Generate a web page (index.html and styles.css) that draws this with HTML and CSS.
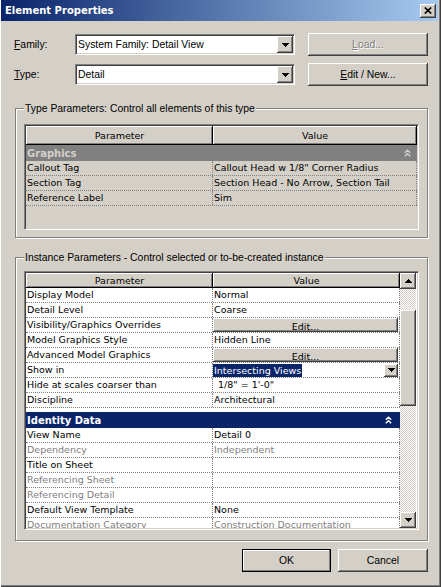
FILE: index.html
```html
<!DOCTYPE html>
<html>
<head>
<meta charset="utf-8">
<title>Element Properties</title>
<link rel="stylesheet" href="styles.css">
</head>
<body>
<div class="window">
  <div class="titlebar">
    <span class="title">Element Properties</span>
    <span class="close"><svg width="8" height="7" viewBox="0 0 8 7"><path d="M0.8 0.5L7.2 6.5M7.2 0.5L0.8 6.5" stroke="#000" stroke-width="1.7"/></svg></span>
  </div>

  <div class="field-row r1">
    <span class="lbl"><u>F</u>amily:</span>
    <div class="combo">
      <span class="combo-text">System Family: Detail View</span>
      <span class="drop"><svg width="7" height="4" viewBox="0 0 7 4" shape-rendering="crispEdges"><path d="M0 0h7v1h-1v1h-1v1h-1v1h-1v-1h-1v-1h-1v-1h-1z"/></svg></span>
    </div>
    <span class="btn side disabled"><u>L</u>oad...</span>
  </div>

  <div class="field-row r2">
    <span class="lbl"><u>T</u>ype:</span>
    <div class="combo">
      <span class="combo-text">Detail</span>
      <span class="drop"><svg width="7" height="4" viewBox="0 0 7 4" shape-rendering="crispEdges"><path d="M0 0h7v1h-1v1h-1v1h-1v1h-1v-1h-1v-1h-1v-1h-1z"/></svg></span>
    </div>
    <span class="btn side"><u>E</u>dit / New...</span>
  </div>

  <div class="group g1">
    <span class="group-title">Type Parameters: Control all elements of this type</span>
    <div class="grid type-grid">
      <div class="hrow tall">
        <span class="hcell h1">Parameter</span>
        <span class="hcell h2">Value</span>
      </div>
      <div class="cat gray">
        <span>Graphics</span>
        <svg class="chev" width="7" height="8" viewBox="0 0 7 8"><path d="M0.8 3.8L3.5 1.2L6.2 3.8M0.8 7.3L3.5 4.7L6.2 7.3" fill="none" stroke="currentColor" stroke-width="1.4"/></svg>
      </div>
      <div class="row"><span class="c1">Callout Tag</span><span class="c2">Callout Head w 1/8" Corner Radius</span></div>
      <div class="row"><span class="c1">Section Tag</span><span class="c2">Section Head - No Arrow, Section Tail</span></div>
      <div class="row"><span class="c1">Reference Label</span><span class="c2">Sim</span></div>
    </div>
  </div>

  <div class="group g2">
    <span class="group-title">Instance Parameters - Control selected or to-be-created instance</span>
    <div class="grid inst-grid">
      <div class="list">
        <div class="hrow">
          <span class="hcell h1">Parameter</span>
          <span class="hcell h2">Value</span>
        </div>
        <div class="rows">
          <div class="row"><span class="c1">Display Model</span><span class="c2">Normal</span></div>
          <div class="row"><span class="c1">Detail Level</span><span class="c2">Coarse</span></div>
          <div class="row"><span class="c1">Visibility/Graphics Overrides</span><span class="c2 nopad"><span class="cell-btn">Edit...</span></span></div>
          <div class="row"><span class="c1">Model Graphics Style</span><span class="c2">Hidden Line</span></div>
          <div class="row"><span class="c1">Advanced Model Graphics</span><span class="c2 nopad"><span class="cell-btn">Edit...</span></span></div>
          <div class="row"><span class="c1">Show in</span><span class="c2 nopad combo-cell"><span class="sel">Intersecting Views</span><span class="dd"><svg width="7" height="4" viewBox="0 0 7 4" shape-rendering="crispEdges"><path d="M0 0h7v1h-1v1h-1v1h-1v1h-1v-1h-1v-1h-1v-1h-1z"/></svg></span></span></div>
          <div class="row"><span class="c1">Hide at scales coarser than</span><span class="c2 indent">1/8" = 1'-0"</span></div>
          <div class="row"><span class="c1">Discipline</span><span class="c2">Architectural</span></div>
          <div class="cat navy">
            <span>Identity Data</span>
            <svg class="chev" width="7" height="8" viewBox="0 0 7 8"><path d="M0.8 3.8L3.5 1.2L6.2 3.8M0.8 7.3L3.5 4.7L6.2 7.3" fill="none" stroke="currentColor" stroke-width="1.4"/></svg>
          </div>
          <div class="row"><span class="c1">View Name</span><span class="c2">Detail 0</span></div>
          <div class="row dis"><span class="c1">Dependency</span><span class="c2">Independent</span></div>
          <div class="row"><span class="c1">Title on Sheet</span><span class="c2"></span></div>
          <div class="row dis"><span class="c1">Referencing Sheet</span><span class="c2"></span></div>
          <div class="row dis"><span class="c1">Referencing Detail</span><span class="c2"></span></div>
          <div class="row"><span class="c1">Default View Template</span><span class="c2">None</span></div>
          <div class="row dis"><span class="c1">Documentation Category</span><span class="c2">Construction Documentation</span></div>
        </div>
      </div>
      <div class="scrollbar">
        <span class="sb-btn"><svg width="7" height="4" viewBox="0 0 7 4" shape-rendering="crispEdges"><path d="M3 0h1v1h1v1h1v1h1v1h-7v-1h1v-1h1v-1h1z"/></svg></span>
        <span class="track-a"></span>
        <span class="thumb"></span>
        <span class="track-b"></span>
        <span class="sb-btn"><svg width="7" height="4" viewBox="0 0 7 4" shape-rendering="crispEdges"><path d="M0 0h7v1h-1v1h-1v1h-1v1h-1v-1h-1v-1h-1v-1h-1z"/></svg></span>
      </div>
    </div>
  </div>

  <div class="footer">
    <span class="btn ok">OK</span>
    <span class="btn cancel">Cancel</span>
  </div>
</div>
</body>
</html>
```

FILE: styles.css
```css
html, body {
  margin: 0;
  padding: 0;
  background: #D4D0C8;
}

.window {
  width: 441px;
  height: 587px;
  box-sizing: border-box;
  background: #D4D0C8;
  box-shadow: inset 1px 0 #ffffff, inset -1px -1px #404040, inset -2px -2px #808080;
  overflow: hidden;
  font-family: "Liberation Sans", Arial, sans-serif;
  font-size: 10.4px;
  color: #000;
}

/* ---------- title bar ---------- */
.titlebar {
  height: 21px;
  margin: 0 3px 0 1px;
  padding: 0 2px 0 4px;
  background: linear-gradient(to right, #0A246A, #A6CAF0);
  display: flex;
  align-items: center;
  justify-content: space-between;
}
.title {
  color: #fff;
  font-family: "DejaVu Sans", Verdana, sans-serif;
  font-weight: bold;
  font-size: 10px;
}
.close {
  width: 16px;
  height: 14px;
  background: #D4D0C8;
  box-shadow: inset -1px -1px #404040, inset 1px 1px #fff, inset -2px -2px #808080;
  display: flex;
  align-items: center;
  justify-content: center;
}

/* ---------- generic classic controls ---------- */
.btn {
  box-sizing: border-box;
  background: #D4D0C8;
  box-shadow: inset -1px -1px #404040, inset 1px 1px #fff, inset -2px -2px #808080;
  display: flex;
  align-items: center;
  justify-content: center;
}
.btn.disabled {
  color: #808080;
  text-shadow: 1px 1px #fff;
}

/* ---------- family / type rows ---------- */
.field-row {
  display: flex;
  align-items: center;
  height: 23px;
  padding-left: 14px;
}
.r1 { margin-top: 12px; }
.r2 { margin-top: 7px; }
.lbl {
  width: 61px;
}
.combo {
  width: 220px;
  height: 21px;
  box-sizing: border-box;
  margin-right: 13px;
  background: #fff;
  border: 1px solid;
  border-color: #808080 #fff #fff #808080;
  box-shadow: inset 1px 1px #404040, inset -1px -1px #D4D0C8;
  padding: 1px;
  display: flex;
  align-items: center;
}
.combo-text {
  flex: 1;
  padding-left: 1px;
}
.drop {
  width: 16px;
  height: 17px;
  box-sizing: border-box;
  background: #D4D0C8;
  box-shadow: inset -1px -1px #404040, inset 1px 1px #fff, inset -2px -2px #808080;
  display: flex;
  align-items: center;
  justify-content: center;
}
.btn.side {
  width: 120px;
  height: 23px;
}

/* ---------- group boxes ---------- */
.group {
  position: relative;
  box-sizing: border-box;
  margin-left: 15px;
  width: 413px;
  border: 1px solid #808080;
  box-shadow: inset 1px 1px #fff, 1px 1px #fff;
  padding-left: 8px;
}
.g1 {
  margin-top: 22px;
  height: 130px;
  padding-top: 15px;
}
.g2 {
  margin-top: 19px;
  height: 284px;
  padding-top: 13px;
}
.group-title {
  position: absolute;
  top: -7px;
  left: 8px;
  padding: 0 1px;
  line-height: 13px;
  background: #D4D0C8;
  white-space: nowrap;
}

/* ---------- property grids ---------- */
.grid {
  width: 395px;
  box-sizing: border-box;
  border: 1px solid;
  border-color: #808080 #fff #fff #808080;
  box-shadow: inset 1px 1px #404040, inset -1px -1px #D4D0C8;
  padding: 1px;
  overflow: hidden;
  font-family: "DejaVu Sans", Verdana, sans-serif;
  font-size: 9.5px;
}
.type-grid {
  height: 106px;
  background: #D4D0C8;
}
.inst-grid {
  height: 259px;
  background: #fff;
  display: flex;
}

.hrow {
  display: flex;
  height: 15px;
}
.hrow.tall {
  height: 19px;
}
.hcell {
  box-sizing: border-box;
  background: #D4D0C8;
  box-shadow: inset -1px -1px #000, inset 1px 1px #fff, inset -2px -2px #808080;
  display: flex;
  align-items: center;
  justify-content: center;
  padding-bottom: 1px;
}
.h1 { width: 187px; }
.h2 { flex: 1; }

.row {
  display: flex;
  height: 15px;
  box-sizing: border-box;
  border-bottom: 1px dotted #808080;
  line-height: 14px;
  white-space: nowrap;
}
.c1 {
  width: 187px;
  box-sizing: border-box;
  border-right: 1px dotted #808080;
  padding-left: 1px;
  overflow: hidden;
}
.c2 {
  flex: 1;
  box-sizing: border-box;
  border-right: 1px dotted #808080;
  padding-left: 1px;
  overflow: hidden;
}
.c2.nopad {
  padding-left: 0;
}
.c2.indent {
  padding-left: 5px;
}
.row.dis {
  color: #808080;
}

.cat {
  height: 16px;
  box-sizing: border-box;
  display: flex;
  align-items: center;
  justify-content: space-between;
  padding: 0 6px 0 1px;
  font-weight: bold;
  font-size: 10px;
}
.cat.gray {
  background: #808080;
  color: #D4D0C8;
  padding-right: 6px;
}
.cat.navy {
  background: #0A246A;
  color: #fff;
  margin-top: 4px;
  padding-right: 8px;
}

.cell-btn {
  display: block;
  width: 185px;
  height: 14px;
  box-sizing: border-box;
  background: #D4D0C8;
  box-shadow: inset -1px -1px #404040, inset 1px 1px #fff, inset -2px -2px #808080;
  text-align: center;
  line-height: 17px;
  overflow: hidden;
}

.combo-cell {
  display: flex;
  align-items: center;
  justify-content: space-between;
  padding-right: 1px;
}
.sel {
  background: #0A246A;
  color: #fff;
  line-height: 13px;
  padding: 0 1px;
}
.dd {
  width: 14px;
  height: 13px;
  box-sizing: border-box;
  background: #D4D0C8;
  box-shadow: inset -1px -1px #404040, inset 1px 1px #fff, inset -2px -2px #808080;
  display: flex;
  align-items: center;
  justify-content: center;
}

/* instance list + scrollbar */
.list {
  width: 374px;
  display: flex;
  flex-direction: column;
  overflow: hidden;
}
.rows {
  flex: 1;
  overflow: hidden;
}
.scrollbar {
  width: 16px;
  display: flex;
  flex-direction: column;
  background: repeating-conic-gradient(#D4D0C8 0 25%, #ffffff 0 50%) 0 0 / 2px 2px;
}
.sb-btn {
  height: 16px;
  flex: none;
  box-sizing: border-box;
  background: #D4D0C8;
  box-shadow: inset -1px -1px #404040, inset 1px 1px #fff, inset -2px -2px #808080;
  display: flex;
  align-items: center;
  justify-content: center;
}
.track-a {
  height: 21px;
  flex: none;
}
.thumb {
  height: 96px;
  flex: none;
  background: #D4D0C8;
  box-shadow: inset -1px -1px #404040, inset 1px 1px #fff, inset -2px -2px #808080;
}
.track-b {
  flex: 1;
}

/* ---------- footer ---------- */
.footer {
  display: flex;
  justify-content: flex-end;
  gap: 7px;
  margin-top: 8px;
  padding-right: 13px;
}
.btn.ok {
  width: 89px;
  height: 23px;
  border: 1px solid #000;
  box-shadow: inset -1px -1px #808080, inset 1px 1px #fff;
}
.btn.cancel {
  width: 90px;
  height: 23px;
}
```
